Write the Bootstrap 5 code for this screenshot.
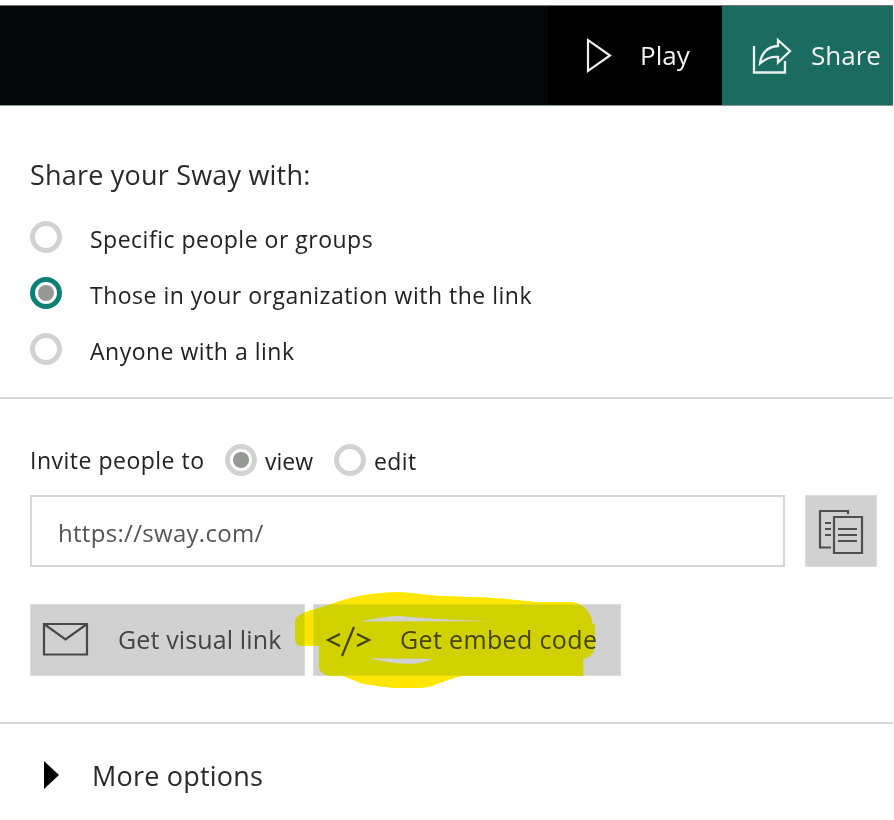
<!DOCTYPE html>
<html lang="en">
<head>
<meta charset="utf-8">
<title>Share your Sway</title>
<link href="https://cdn.jsdelivr.net/npm/bootstrap@5.3.0/dist/css/bootstrap.min.css" rel="stylesheet">
<style>
body{font-family:"Open Sans","Noto Sans",sans-serif;color:#222;background:#fff;overflow:hidden}
.sway-page{width:893px;height:820px;line-height:32px}
.top-bar{height:101px;margin-top:5px;background:#050608;border-top:1px solid #777;border-bottom:1px solid #8a9995;color:#f2f2f2;font-size:26px}
.play-tab{width:174px;background:#000}
.share-tab{width:171px;background:#1b6c60}
.top-bar .fit{margin-top:-2px}
.share-choices{height:293px;padding:53px 30px 0;border-bottom:2px solid #d9d9d9;font-size:23px;letter-spacing:.5px}
.heading-text{font-size:27px;height:32px;margin-bottom:18px;color:#2a2a2a;letter-spacing:.2px}
.choice-row{height:56px}
.ring{width:32px;height:32px;border:5px solid #d2d2d2;border-radius:50%;flex:none;padding:3px}
.ring.picked{background:#969895 content-box}
.ring.active-ring{border-color:#0c8075}
.choice-text{margin-left:28px;padding-top:4px}
.invite{height:325px;padding:43px 16px 0 30px;border-bottom:2px solid #d9d9d9;font-size:23px}
.invite-row{height:36px}
.invite-label{width:195px;letter-spacing:.5px}
.view-label{width:77px}
.view-label,.edit-label{padding-top:2px}
.edit-label{letter-spacing:.4px}
.link-row{margin-top:17px}
.link-box{width:755px;height:72px;border:2px solid #d6d6d6;padding:3px 0 0 26px;color:#555;font-size:24px;letter-spacing:.3px}
.copy-btn{width:72px;height:72px}
.gray-btn{background:#d1d1d1;color:#444;border-radius:0;height:72px;font-size:25px;border:1px solid #dcdcdc;padding:0;line-height:32px}
.gray-btn .fit{margin-top:-2px}
.visual-btn{width:275px;letter-spacing:.13px}
.embed-btn{width:308px;letter-spacing:.36px}
.button-row{margin-top:37px;gap:8px}
.marker{left:-30px;top:-14px;pointer-events:none}
.marker-ink{mix-blend-mode:multiply}
.more{height:104px;padding:0 43px;font-size:27px;color:#2a2a2a;letter-spacing:.2px}
svg{display:block;flex:none}
.fit{white-space:nowrap;display:inline-block}
</style>
<script src="https://cdn.jsdelivr.net/npm/bootstrap@5.3.0/dist/js/bootstrap.bundle.min.js"></script>
</head>
<body>
<div class="sway-page d-flex flex-column">
  <header class="top-bar d-flex justify-content-end flex-shrink-0">
    <div class="play-tab d-flex align-items-center">
      <svg width="92" height="99" viewBox="548 6 92 99" fill="none" stroke="#eee" stroke-width="2.2"><path d="M588 40V71L610 55.5Z"/></svg>
      <span class="fit">Play</span>
    </div>
    <div class="share-tab d-flex align-items-center">
      <svg width="89" height="99" viewBox="722 6 89 99" fill="none" stroke="#e9f1ef" stroke-width="2.3"><path d="M754 46V72.500H785V61"/><path d="M778 46V40L790 51L778 62.500V57C770 56 765 59 760 63.500C761 54 767 46.500 778 46Z"/></svg>
      <span class="fit">Share</span>
    </div>
  </header>
  <section class="share-choices flex-shrink-0">
    <div class="heading-text"><span class="fit">Share your Sway with:</span></div>
    <div class="choice-row d-flex align-items-center"><span class="ring"></span><span class="choice-text"><span class="fit">Specific people or groups</span></span></div>
    <div class="choice-row d-flex align-items-center"><span class="ring picked active-ring"></span><span class="choice-text"><span class="fit">Those in your organization with the link</span></span></div>
    <div class="choice-row d-flex align-items-center"><span class="ring"></span><span class="choice-text"><span class="fit">Anyone with a link</span></span></div>
  </section>
  <section class="invite flex-shrink-0">
    <div class="invite-row d-flex align-items-center">
      <span class="invite-label">Invite people to</span>
      <span class="ring picked"></span><span class="ps-2 view-label">view</span>
      <span class="ring"></span><span class="ps-2 edit-label">edit</span>
    </div>
    <div class="link-row d-flex justify-content-between">
      <div class="link-box d-flex align-items-center"><span class="fit">https://sway.com/</span></div>
      <button class="btn gray-btn copy-btn" aria-label="Copy">
        <svg width="70" height="70" viewBox="806 496 70 70" fill="none" stroke="#505050" stroke-width="2.2"><path d="M848 514V511H820V547.500H831M825 523H831M825 529H831M825 535H831"/><path d="M834 517H862V553H834ZM838 529H857M838 535H857M838 541H857"/></svg>
      </button>
    </div>
    <div class="button-row d-flex position-relative">
      <svg class="marker position-absolute" width="640" height="104" viewBox="0 590 640 104" fill="#ffe600"><defs><path id="ink" fill-rule="evenodd" d="M295 622C295 616 302 613 312 610C330 605 346 598 365 595Q382 592 398 592.300C418 593 430 596 445 596.300L485 597.500Q512 599 537 602.300L568 602C582 602 591 610 592.700 624L595 625V645Q594 657 583.300 659V676H462C452 678 446 681 438 683.500C430 687 425 688 414 688H402C388 688 379 686 365 684C356 682 350 678 342 676H332Q319 675 319 666V645.700H299Q295 645 295 638ZM361 621.500C378 617.500 391 616 400 616C415 617 428 619 458 620L492 621.300ZM369 658.300C385 662 400 664 409 664C418 664 426 661 433 659Z"/></defs><use href="#ink"/></svg>
      <button class="btn gray-btn visual-btn d-flex align-items-center position-relative">
        <svg width="87" height="70" viewBox="31 605 87 70" fill="none" stroke="#484848" stroke-width="2.200"><path d="M44 624H87V654.500H44ZM44 624L65.500 639.500L87 624"/></svg>
        <span class="fit">Get visual link</span>
      </button>
      <button class="btn gray-btn embed-btn d-flex align-items-center position-relative">
        <svg width="86" height="70" viewBox="314 605 86 70" fill="none" stroke="#444" stroke-width="2.200"><path d="M340 634L328 640L340 646M357 634L369 640L357 646M354 627L342 656"/></svg>
        <span class="fit">Get embed code</span>
      </button>
      <svg class="marker marker-ink position-absolute" width="640" height="104" viewBox="0 590 640 104" fill="#ffff00"><use href="#ink"/></svg>
    </div>
  </section>
  <section class="more d-flex align-items-center flex-shrink-0">
    <svg width="49" height="32" viewBox="0 0 49 32"><path d="M1 1L16 15L1 29Z"/></svg>
    <span class="fit">More options</span>
  </section>
</div>
</body>
</html>
